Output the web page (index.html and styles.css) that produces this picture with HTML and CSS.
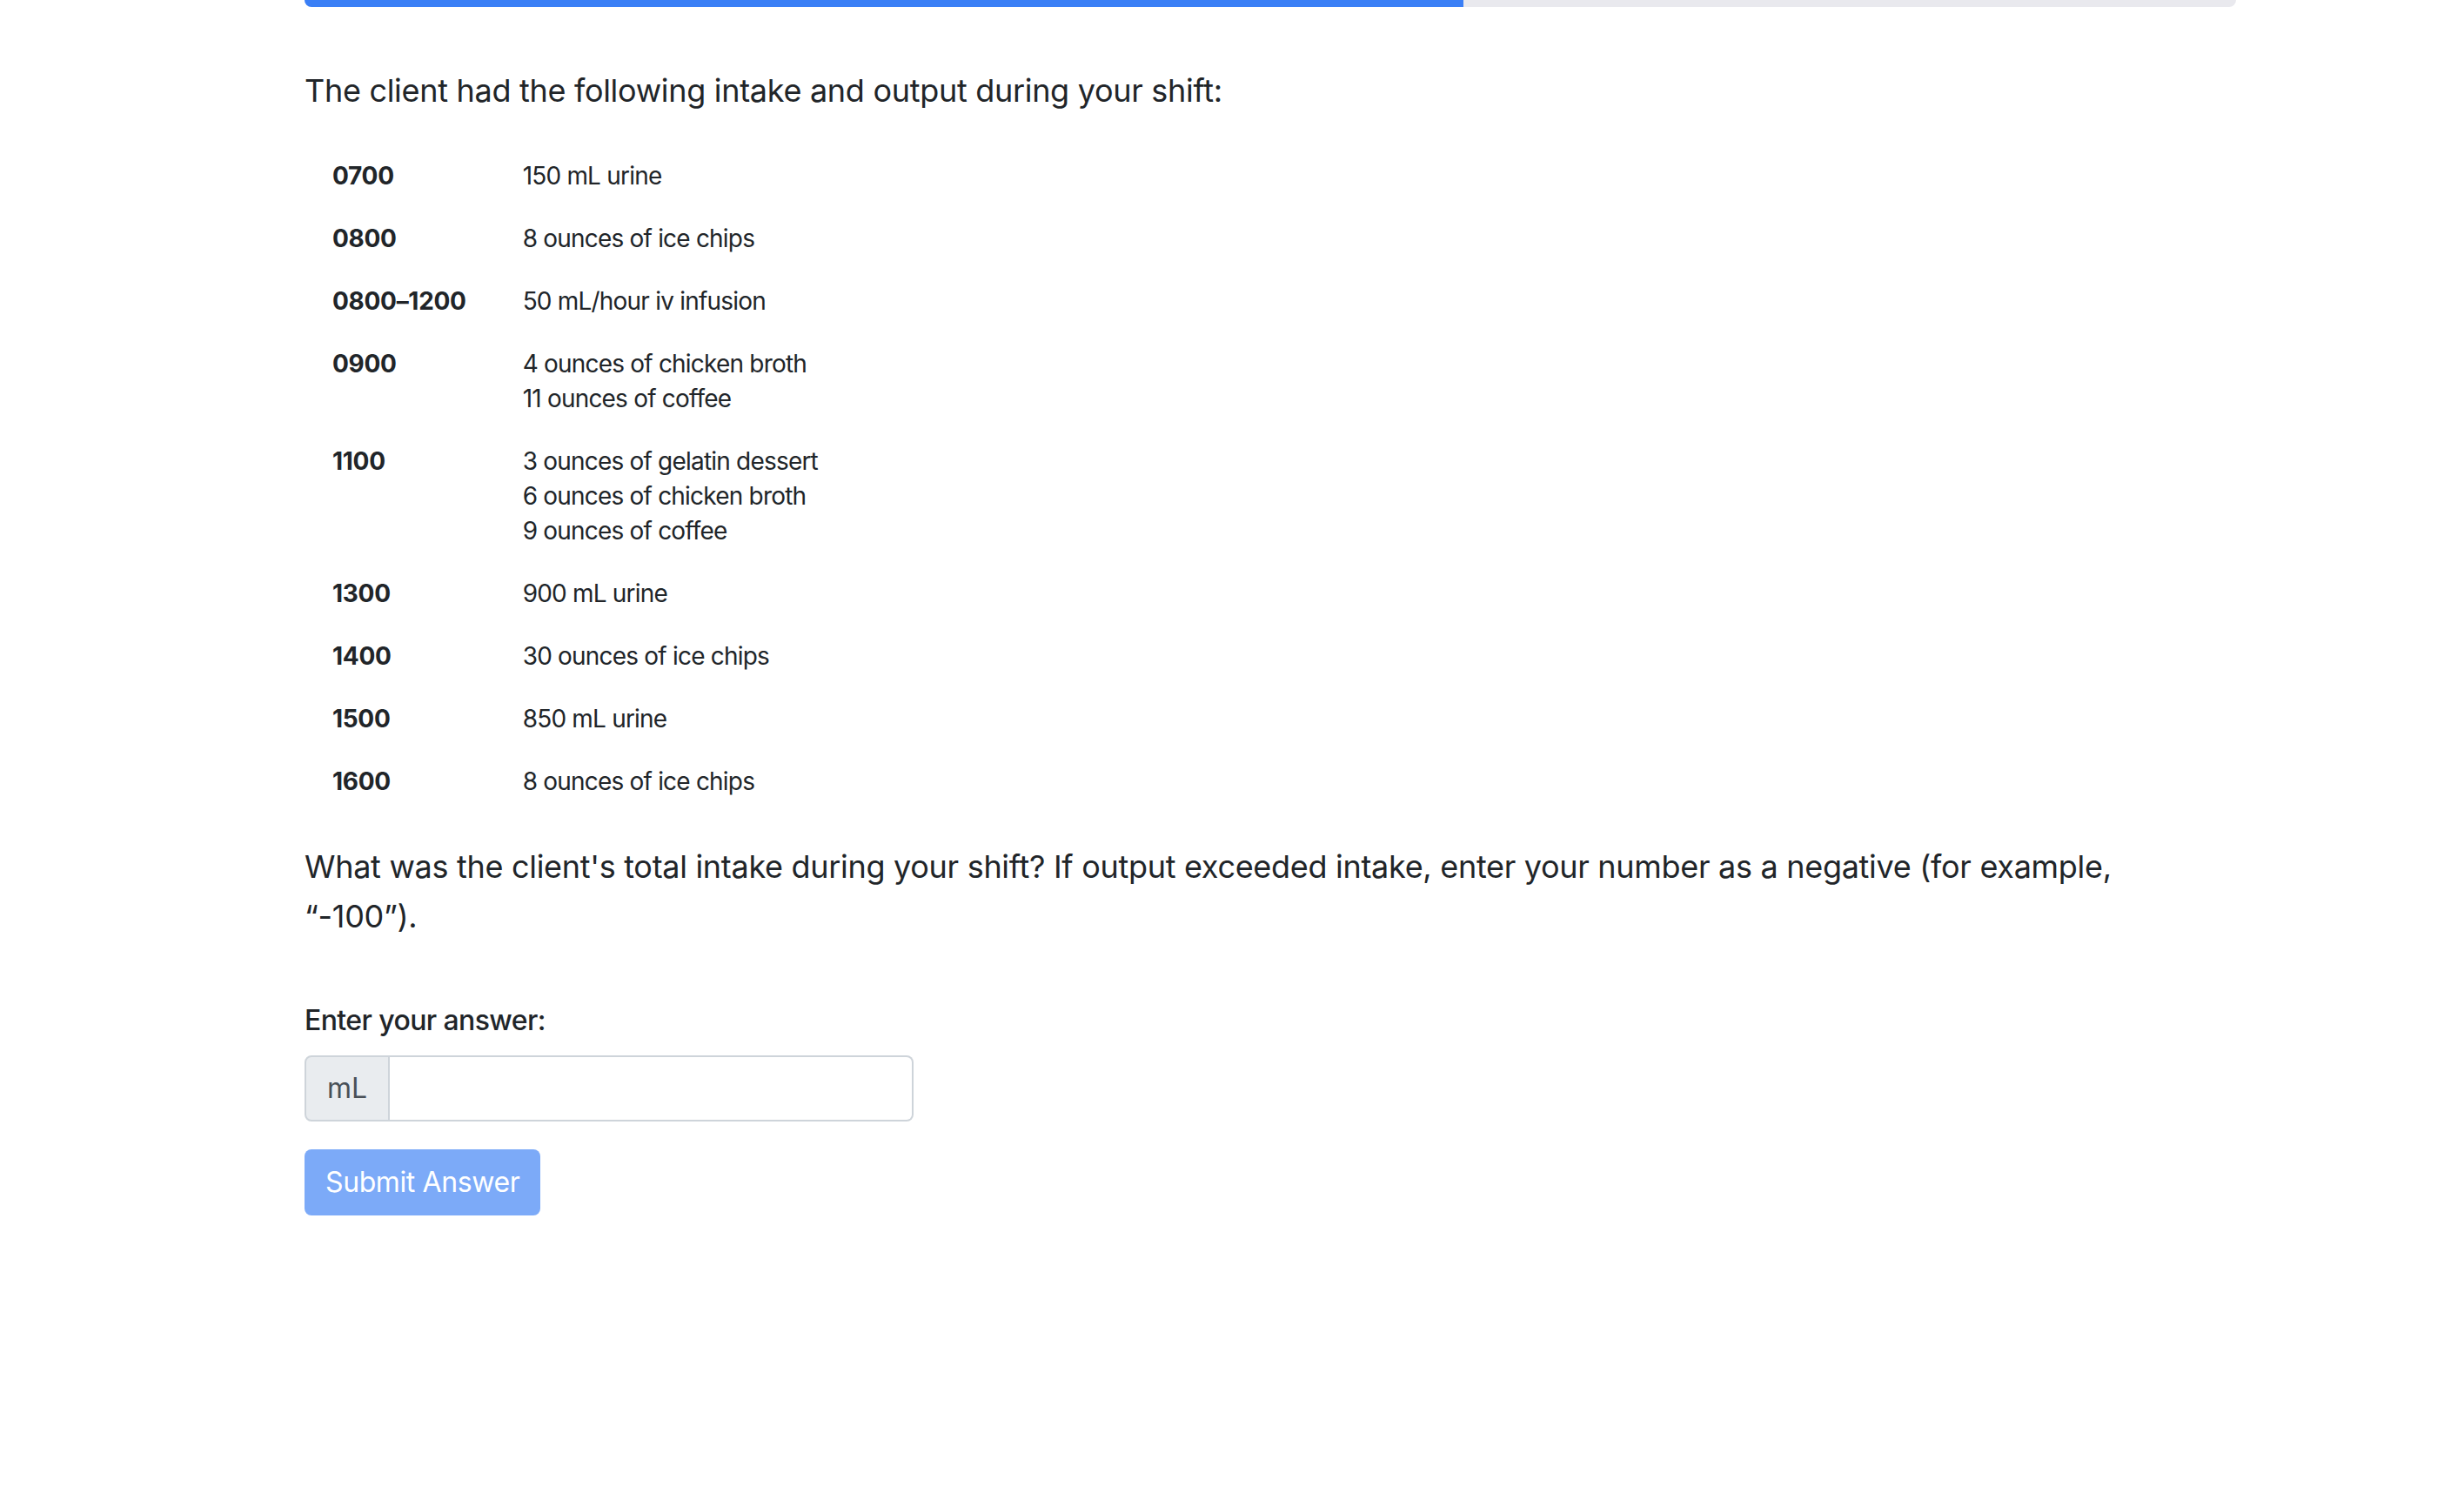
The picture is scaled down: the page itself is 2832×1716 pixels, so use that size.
FILE: index.html
```html
<!DOCTYPE html>
<html lang="en">
<head>
<meta charset="utf-8">
<title>Intake and Output</title>
<link rel="stylesheet" href="styles.css">
</head>
<body>
<div class="page">
  <div class="progress"><div class="progress-bar" style="width: 60%"></div></div>
  <p class="lead">The client had the following intake and output during your shift:</p>
  <table class="io-table">
    <tbody>
      <tr><td class="time">0700</td><td class="desc">150 mL urine</td></tr>
      <tr><td class="time">0800</td><td class="desc">8 ounces of ice chips</td></tr>
      <tr><td class="time">0800–1200</td><td class="desc">50 mL/hour iv infusion</td></tr>
      <tr><td class="time">0900</td><td class="desc">4 ounces of chicken broth<br>11 ounces of coffee</td></tr>
      <tr><td class="time">1100</td><td class="desc">3 ounces of gelatin dessert<br>6 ounces of chicken broth<br>9 ounces of coffee</td></tr>
      <tr><td class="time">1300</td><td class="desc">900 mL urine</td></tr>
      <tr><td class="time">1400</td><td class="desc">30 ounces of ice chips</td></tr>
      <tr><td class="time">1500</td><td class="desc">850 mL urine</td></tr>
      <tr><td class="time">1600</td><td class="desc">8 ounces of ice chips</td></tr>
    </tbody>
  </table>
  <p class="lead question">What was the client's total intake during your shift? If output exceeded intake, enter your number as a negative (for example,<br>“-100”).</p>
  <form class="answer">
    <label class="answer-label" for="answer">Enter your answer:</label>
    <div class="input-group">
      <span class="input-prefix">mL</span>
      <input class="input-field" id="answer" type="text">
    </div>
    <button class="btn-submit" type="button" disabled>Submit Answer</button>
  </form>
</div>
</body>
</html>
```

FILE: styles.css
```css
* { box-sizing: border-box; }
html, body { margin: 0; padding: 0; background: #fff; }
body {
  font-family: Inter, "Open Sans", "Liberation Sans", sans-serif;
  color: #212529;
}
.page {
  width: 2220px;
  margin-left: 350px;
}
.progress {
  height: 8px;
  background: #e9e9ee;
  border-radius: 0 0 8px 8px;
  overflow: hidden;
  display: flex;
}
.progress-bar {
  background: #3a7ff6;
  height: 100%;
}
.lead {
  font-size: 36px;
  line-height: 57.6px;
  font-weight: 400;
  letter-spacing: -0.3px;
  margin: 68px 0 0;
}
.io-table {
  border-collapse: collapse;
  margin-top: 32px;
  font-size: 28px;
  line-height: 40px;
  letter-spacing: -0.8px;
}
.io-table td {
  padding: 16px 32px;
  vertical-align: top;
}
.io-table td.desc {
  padding-left: 33px;
}
.io-table .time {
  font-weight: 700;
  white-space: nowrap;
  letter-spacing: -0.3px;
}
.question {
  margin-top: 34px;
  margin-bottom: 66px;
}
.answer {
  display: flex;
  flex-direction: column;
  align-items: flex-start;
}
.answer-label {
  font-size: 32px;
  line-height: 48px;
  font-weight: 500;
  letter-spacing: -0.6px;
  margin-bottom: 16px;
}
.input-group {
  display: flex;
  width: 700px;
  height: 76px;
}
.input-prefix {
  display: flex;
  align-items: center;
  padding: 0 24px;
  background: #e9ecef;
  color: #495057;
  font-size: 32px;
  border: 2px solid #ced4da;
  border-radius: 8px 0 0 8px;
}
.input-field {
  flex: 1;
  min-width: 0;
  border: 2px solid #ced4da;
  border-left: none;
  border-radius: 0 8px 8px 0;
  font-family: inherit;
  font-size: 32px;
  padding: 0 24px;
  outline: none;
}
.btn-submit {
  margin-top: 32px;
  height: 76px;
  padding: 0 24px;
  background: #7caaf8;
  color: #fff;
  border: none;
  border-radius: 8px;
  font-family: inherit;
  font-size: 32px;
  font-weight: 400;
  letter-spacing: -0.4px;
}
```
